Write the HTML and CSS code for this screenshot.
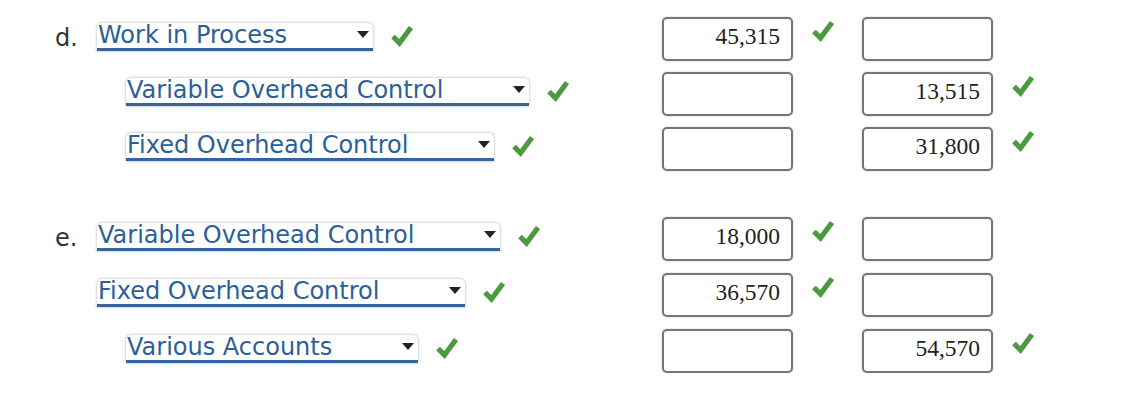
FILE: index.html
```html
<!DOCTYPE html>
<html>
<head>
<meta charset="utf-8">
<link rel="stylesheet" href="styles.css">
</head>
<body>
<div class="sheet">
  <div class="group">
    <div class="row">
      <div class="acct">
        <span class="lbl">d.</span>
        <span class="sel"><span class="sel-text">Work in Process</span><svg class="arrow" viewBox="0 0 12 7"><path d="M0 0H12L6 7Z"/></svg></span>
        <svg class="check" viewBox="0 0 22 21"><path d="M2 11.5L8.5 18L20 2.5"/></svg>
      </div>
      <div class="amt">45,315</div>
      <div class="ok"><svg class="check" viewBox="0 0 22 21"><path d="M2 11.5L8.5 18L20 2.5"/></svg></div>
      <div class="amt"></div>
      <div class="ok"></div>
    </div>
    <div class="row">
      <div class="acct">
        <span class="lbl"></span>
        <span class="sel indent"><span class="sel-text">Variable Overhead Control</span><svg class="arrow" viewBox="0 0 12 7"><path d="M0 0H12L6 7Z"/></svg></span>
        <svg class="check" viewBox="0 0 22 21"><path d="M2 11.5L8.5 18L20 2.5"/></svg>
      </div>
      <div class="amt"></div>
      <div class="ok"></div>
      <div class="amt">13,515</div>
      <div class="ok"><svg class="check" viewBox="0 0 22 21"><path d="M2 11.5L8.5 18L20 2.5"/></svg></div>
    </div>
    <div class="row">
      <div class="acct">
        <span class="lbl"></span>
        <span class="sel indent"><span class="sel-text">Fixed Overhead Control</span><svg class="arrow" viewBox="0 0 12 7"><path d="M0 0H12L6 7Z"/></svg></span>
        <svg class="check" viewBox="0 0 22 21"><path d="M2 11.5L8.5 18L20 2.5"/></svg>
      </div>
      <div class="amt"></div>
      <div class="ok"></div>
      <div class="amt">31,800</div>
      <div class="ok"><svg class="check" viewBox="0 0 22 21"><path d="M2 11.5L8.5 18L20 2.5"/></svg></div>
    </div>
  </div>
  <div class="group group-e">
    <div class="row">
      <div class="acct">
        <span class="lbl">e.</span>
        <span class="sel"><span class="sel-text">Variable Overhead Control</span><svg class="arrow" viewBox="0 0 12 7"><path d="M0 0H12L6 7Z"/></svg></span>
        <svg class="check" viewBox="0 0 22 21"><path d="M2 11.5L8.5 18L20 2.5"/></svg>
      </div>
      <div class="amt">18,000</div>
      <div class="ok"><svg class="check" viewBox="0 0 22 21"><path d="M2 11.5L8.5 18L20 2.5"/></svg></div>
      <div class="amt"></div>
      <div class="ok"></div>
    </div>
    <div class="row">
      <div class="acct">
        <span class="lbl"></span>
        <span class="sel"><span class="sel-text">Fixed Overhead Control</span><svg class="arrow" viewBox="0 0 12 7"><path d="M0 0H12L6 7Z"/></svg></span>
        <svg class="check" viewBox="0 0 22 21"><path d="M2 11.5L8.5 18L20 2.5"/></svg>
      </div>
      <div class="amt">36,570</div>
      <div class="ok"><svg class="check" viewBox="0 0 22 21"><path d="M2 11.5L8.5 18L20 2.5"/></svg></div>
      <div class="amt"></div>
      <div class="ok"></div>
    </div>
    <div class="row">
      <div class="acct">
        <span class="lbl"></span>
        <span class="sel indent"><span class="sel-text">Various Accounts</span><svg class="arrow" viewBox="0 0 12 7"><path d="M0 0H12L6 7Z"/></svg></span>
        <svg class="check" viewBox="0 0 22 21"><path d="M2 11.5L8.5 18L20 2.5"/></svg>
      </div>
      <div class="amt"></div>
      <div class="ok"></div>
      <div class="amt">54,570</div>
      <div class="ok"><svg class="check" viewBox="0 0 22 21"><path d="M2 11.5L8.5 18L20 2.5"/></svg></div>
    </div>
  </div>
</div>
</body>
</html>
```
FILE: styles.css
```css
html, body {
  margin: 0;
  padding: 0;
  background: #ffffff;
}

.sheet {
  padding: 17px 0 0 55px;
  display: flex;
  flex-direction: column;
  gap: 46px;
}

.group {
  display: flex;
  flex-direction: column;
  gap: 11px;
}

.group-e {
  gap: 12px;
}

.row {
  display: grid;
  grid-template-columns: 607px 131px 69px 131px 60px;
  height: 44px;
}

.acct {
  display: flex;
  align-items: flex-start;
}

.lbl {
  width: 42px;
  flex: none;
  font-family: "DejaVu Sans", Verdana, sans-serif;
  font-size: 24px;
  line-height: 28px;
  color: #333333;
  margin-top: 7px;
}

.sel {
  display: inline-flex;
  align-items: center;
  height: 25px;
  background: #ffffff;
  border-bottom: 3px solid #33649a;
  border-radius: 5px 5px 0 0;
  box-shadow: 0 0 3px rgba(0, 0, 0, 0.35);
  padding: 0 4px 0 1px;
  margin-top: 6px;
}

.sel.indent {
  margin-left: 29px;
}

.sel-text {
  font-family: "DejaVu Sans", Verdana, sans-serif;
  font-size: 24px;
  line-height: 25px;
  color: #2c5f97;
  white-space: nowrap;
}

.arrow {
  width: 12px;
  height: 7px;
  margin-left: 70px;
  margin-top: -2px;
  fill: #222222;
}

.check {
  width: 22px;
  height: 21px;
  overflow: visible;
  fill: none;
  stroke: #4b9a3f;
  stroke-width: 5.2;
  stroke-linejoin: miter;
}

.acct .check {
  margin-left: 18px;
  margin-top: 8px;
}

.amt {
  box-sizing: border-box;
  height: 44px;
  border: 2px solid #767676;
  border-radius: 5px;
  box-shadow: 0 0 2px rgba(0, 0, 0, 0.25);
  background: #ffffff;
  font-family: "Liberation Serif", "Times New Roman", serif;
  font-size: 23.5px;
  line-height: 34px;
  color: #222222;
  text-align: right;
  padding-right: 11px;
}

.ok {
  display: flex;
  align-items: flex-start;
  padding-left: 19px;
}

.ok .check {
  margin-top: 3px;
}
```
